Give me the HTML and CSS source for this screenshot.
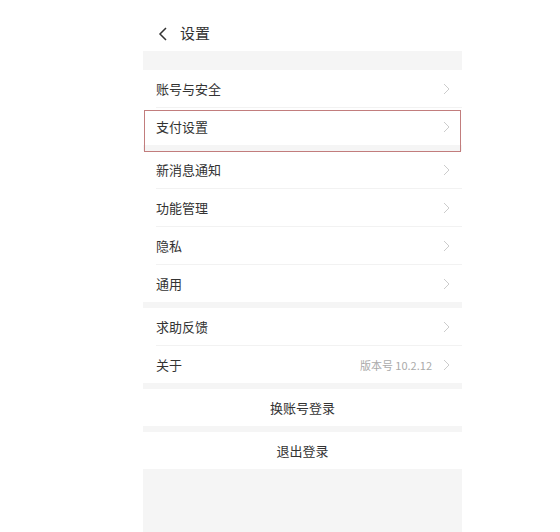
FILE: index.html
```html
<!DOCTYPE html>
<html lang="zh-CN">
<head>
<meta charset="utf-8">
<title>设置</title>
<link rel="stylesheet" href="styles.css">
</head>
<body>
<div class="phone">
  <header class="topbar">
    <svg class="back" width="10" height="14" viewBox="0 0 10 14"><path d="M8 1 L2 7 L8 13" fill="none" stroke="#333" stroke-width="1.5"/></svg>
    <span class="title">设置</span>
  </header>
  <div class="band band-top"></div>
  <div class="group">
    <div class="row"><span class="label">账号与安全</span><svg class="chev" width="7" height="12" viewBox="0 0 7 12"><path d="M1 1 L6 6 L1 11" fill="none" stroke="#cccccc" stroke-width="1"/></svg></div>
    <div class="row row-marked"><span class="label">支付设置</span><svg class="chev" width="7" height="12" viewBox="0 0 7 12"><path d="M1 1 L6 6 L1 11" fill="none" stroke="#cccccc" stroke-width="1"/></svg><span class="mark"></span></div>
  </div>
  <div class="band"></div>
  <div class="group">
    <div class="row"><span class="label">新消息通知</span><svg class="chev" width="7" height="12" viewBox="0 0 7 12"><path d="M1 1 L6 6 L1 11" fill="none" stroke="#cccccc" stroke-width="1"/></svg></div>
    <div class="row"><span class="label">功能管理</span><svg class="chev" width="7" height="12" viewBox="0 0 7 12"><path d="M1 1 L6 6 L1 11" fill="none" stroke="#cccccc" stroke-width="1"/></svg></div>
    <div class="row"><span class="label">隐私</span><svg class="chev" width="7" height="12" viewBox="0 0 7 12"><path d="M1 1 L6 6 L1 11" fill="none" stroke="#cccccc" stroke-width="1"/></svg></div>
    <div class="row"><span class="label">通用</span><svg class="chev" width="7" height="12" viewBox="0 0 7 12"><path d="M1 1 L6 6 L1 11" fill="none" stroke="#cccccc" stroke-width="1"/></svg></div>
  </div>
  <div class="band"></div>
  <div class="group">
    <div class="row"><span class="label">求助反馈</span><svg class="chev" width="7" height="12" viewBox="0 0 7 12"><path d="M1 1 L6 6 L1 11" fill="none" stroke="#cccccc" stroke-width="1"/></svg></div>
    <div class="row"><span class="label">关于</span><span class="value">版本号 10.2.12</span><svg class="chev" width="7" height="12" viewBox="0 0 7 12"><path d="M1 1 L6 6 L1 11" fill="none" stroke="#cccccc" stroke-width="1"/></svg></div>
  </div>
  <div class="band"></div>
  <div class="action">换账号登录</div>
  <div class="band"></div>
  <div class="action">退出登录</div>
  <div class="bottom"></div>
</div>
</body>
</html>
```
FILE: styles.css
```css
html, body {
  margin: 0;
  padding: 0;
  background: #ffffff;
}
body {
  font-family: "Noto Sans CJK SC", "Noto Sans", sans-serif;
  color: #333333;
}
.phone {
  margin-left: 143px;
  width: 319px;
  height: 532px;
  display: flex;
  flex-direction: column;
  background: #ffffff;
}
.topbar {
  height: 51px;
  box-sizing: border-box;
  padding: 24px 0 0 15px;
  display: flex;
  align-items: flex-start;
}
.back {
  margin-top: 3px;
  display: block;
}
.title {
  margin-left: 12px;
  font-size: 15px;
  line-height: 18px;
  color: #333333;
}
.band {
  height: 6px;
  background: #f5f5f5;
}
.band-top {
  height: 19px;
}
.group {
  display: flex;
  flex-direction: column;
}
.row {
  position: relative;
  height: 37px;
  display: flex;
  align-items: center;
  padding: 0 12px 0 13px;
  font-size: 13px;
}
.row + .row::before {
  content: "";
  position: absolute;
  top: -1px;
  left: 13px;
  right: 0;
  height: 1px;
  background: #f2f2f2;
}
.row + .row {
  margin-top: 1px;
}
.label {
  flex: 1;
  color: #333333;
}
.value {
  font-size: 11px;
  color: #aaaaaa;
  margin-right: 11px;
}
.chev {
  display: block;
  flex: none;
}
.mark {
  position: absolute;
  top: 2px;
  left: 1px;
  right: 1px;
  height: 42px;
  box-sizing: border-box;
  border: 1.5px solid #c27d7d;
  z-index: 2;
}
.action {
  height: 37px;
  display: flex;
  align-items: center;
  justify-content: center;
  font-size: 13px;
  color: #333333;
}
.bottom {
  flex: 1;
  background: #f5f5f5;
}
```
